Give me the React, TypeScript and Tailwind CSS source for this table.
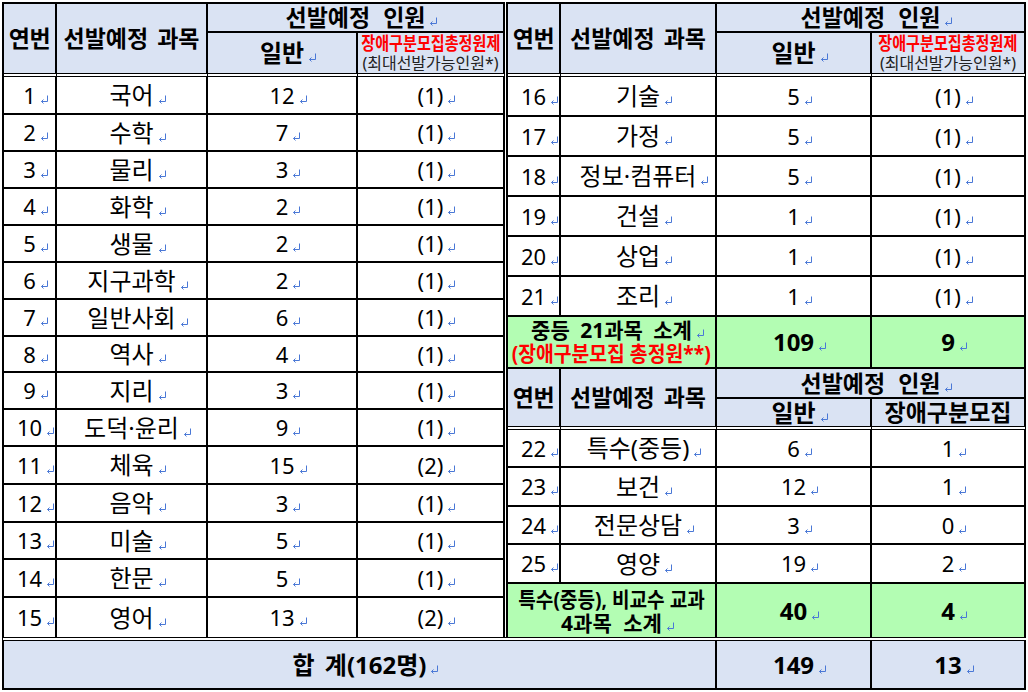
import React from "react";

const Mark = () => (
  <svg
    width="9"
    height="9"
    viewBox="0 0 9 9"
    className="inline-block ml-[4px] -mr-[13px] align-baseline"
    fill="none"
    stroke="#4a78d6"
    strokeWidth="1"
  >
    <path d="M7.5 0.5V6.5H1.5" />
    <path d="M3.5 4.5L1.5 6.5L3.5 8.5" />
  </svg>
);

const T = ({ children }: { children: React.ReactNode }) => (
  <span className="whitespace-nowrap">
    {children}
    <Mark />
  </span>
);

const C = ({ children, className = "" }: { children?: React.ReactNode; className?: string }) => (
  <div className={`flex items-center justify-center border-r-2 border-black ${className}`}>{children}</div>
);

const HEAD = "bg-[#dae3f3] font-bold text-[23px] text-black";
const DBL = "border-b-4 border-double bg-clip-padding";

const RedHead = () => (
  <div className="flex flex-col items-center">
    <span className="inline-block text-[18px] leading-[21px] font-bold text-[#ff0000] whitespace-nowrap scale-x-[0.84]">
      장애구분모집총정원제
    </span>
    <span className="text-[16px] leading-[19px] font-normal text-[#222222] whitespace-nowrap">
      (최대선발가능인원*)
    </span>
  </div>
);

const Header = () => (
  <>
    <C className={`${HEAD} ${DBL} row-span-2 tracking-[-0.5px]`}>연번</C>
    <C className={`${HEAD} ${DBL} row-span-2 [word-spacing:3px]`}>선발예정 과목</C>
    <C className={`${HEAD} border-b-2 col-span-2 [word-spacing:7px]`}>
      <T>선발예정 인원</T>
    </C>
    <C className={`${HEAD} ${DBL} text-[24px]`}>
      <T>일반</T>
    </C>
    <C className={`${HEAD} ${DBL}`}>
      <RedHead />
    </C>
  </>
);

const left: [string, string, string, string][] = [
  ["1", "국어", "12", "(1)"],
  ["2", "수학", "7", "(1)"],
  ["3", "물리", "3", "(1)"],
  ["4", "화학", "2", "(1)"],
  ["5", "생물", "2", "(1)"],
  ["6", "지구과학", "2", "(1)"],
  ["7", "일반사회", "6", "(1)"],
  ["8", "역사", "4", "(1)"],
  ["9", "지리", "3", "(1)"],
  ["10", "도덕·윤리", "9", "(1)"],
  ["11", "체육", "15", "(2)"],
  ["12", "음악", "3", "(1)"],
  ["13", "미술", "5", "(1)"],
  ["14", "한문", "5", "(1)"],
  ["15", "영어", "13", "(2)"],
];

const right1: [string, string, string, string][] = [
  ["16", "기술", "5", "(1)"],
  ["17", "가정", "5", "(1)"],
  ["18", "정보·컴퓨터", "5", "(1)"],
  ["19", "건설", "1", "(1)"],
  ["20", "상업", "1", "(1)"],
  ["21", "조리", "1", "(1)"],
];

const right2: [string, string, string, string][] = [
  ["22", "특수(중등)", "6", "1"],
  ["23", "보건", "12", "1"],
  ["24", "전문상담", "3", "0"],
  ["25", "영양", "19", "2"],
];

const BODY = "text-[22px] text-black bg-white";

const Row = ({ r, last = false }: { r: [string, string, string, string]; last?: boolean }) => {
  const b = last ? "" : "border-b-2";
  return (
    <>
      <C className={`${BODY} ${b}`}>
        <T>{r[0]}</T>
      </C>
      <C className={`${BODY} ${b} text-[24px]`}>
        <T>{r[1]}</T>
      </C>
      <C className={`${BODY} ${b}`}>
        <T>{r[2]}</T>
      </C>
      <C className={`${BODY} ${b}`}>
        <T>{r[3]}</T>
      </C>
    </>
  );
};

const GREEN = "bg-[#b3fdb3] text-black";

export default function App() {
  return (
    <div className="w-[1028px] h-[692px] bg-white pt-[2px] pl-[2px] font-['Noto_Sans','Noto_Sans_CJK_KR',sans-serif] overflow-hidden">
      <div className="flex gap-[1px]">
        {/* left table */}
        <div className="grid w-[503px] border-l-2 border-t-2 border-black grid-cols-[53px_151px_150px_147px] grid-rows-[29px_44px_38px_37px_37px_37px_37px_37px_37px_36px_37px_37px_38px_38px_37px_38px_39px]">
          <Header />
          {left.map((r, i) => (
            <Row key={r[0]} r={r} last={i === left.length - 1} />
          ))}
        </div>

        {/* right table */}
        <div className="grid w-[520px] border-l-2 border-t-2 border-black grid-cols-[53px_156px_155px_154px] grid-rows-[29px_44px_40px_40px_40px_40px_40px_40px_52px_30px_31px_38px_39px_38px_39px_53px]">
          <Header />
          {right1.map((r) => (
            <Row key={r[0]} r={r} />
          ))}
          <C className={`${GREEN} border-b-2 col-span-2`}>
            <div className="flex flex-col items-center">
              <span className="text-[21px] leading-[23px] font-bold [word-spacing:5px] whitespace-nowrap">
                <T>중등 21과목 소계</T>
              </span>
              <span className="inline-block text-[21px] leading-[23px] font-bold text-[#ff0000] whitespace-nowrap scale-x-[0.92]">
                (장애구분모집 총정원**)
              </span>
            </div>
          </C>
          <C className={`${GREEN} border-b-2 text-[24px] font-bold`}>
            <T>109</T>
          </C>
          <C className={`${GREEN} border-b-2 text-[24px] font-bold`}>
            <T>9</T>
          </C>

          <C className={`${HEAD} ${DBL} row-span-2 tracking-[-0.5px]`}>연번</C>
          <C className={`${HEAD} ${DBL} row-span-2 [word-spacing:3px]`}>선발예정 과목</C>
          <C className={`${HEAD} border-b-2 col-span-2 [word-spacing:7px]`}>
            <T>선발예정 인원</T>
          </C>
          <C className={`${HEAD} ${DBL} text-[24px]`}>
            <T>일반</T>
          </C>
          <C className={`${HEAD} ${DBL}`}>장애구분모집</C>

          {right2.map((r) => (
            <Row key={r[0]} r={r} />
          ))}
          <C className={`${GREEN} col-span-2`}>
            <div className="flex flex-col items-center">
              <span className="inline-block text-[21px] leading-[24px] font-bold whitespace-nowrap scale-x-[0.91]">
                특수(중등), 비교수 교과
              </span>
              <span className="text-[21px] leading-[24px] font-bold [word-spacing:6px] whitespace-nowrap">
                <T>4과목 소계</T>
              </span>
            </div>
          </C>
          <C className={`${GREEN} text-[24px] font-bold`}>
            <T>40</T>
          </C>
          <C className={`${GREEN} text-[24px] font-bold`}>
            <T>4</T>
          </C>
        </div>
      </div>

      {/* total row */}
      <div className="grid w-[1024px] h-[53px] grid-cols-[713px_155px_154px] border-l-2 border-t-4 border-double border-black bg-white">
        <div className="flex items-center justify-center bg-[#dae3f3] border-r-2 border-b-2 border-solid border-black text-[24px] font-bold text-black [word-spacing:4px]">
          <T>합 계(162명)</T>
        </div>
        <div className="flex items-center justify-center bg-[#dae3f3] border-r-2 border-b-2 border-solid border-black text-[24px] font-bold text-black">
          <T>149</T>
        </div>
        <div className="flex items-center justify-center bg-[#dae3f3] border-r-2 border-b-2 border-solid border-black text-[24px] font-bold text-black">
          <T>13</T>
        </div>
      </div>
    </div>
  );
}
